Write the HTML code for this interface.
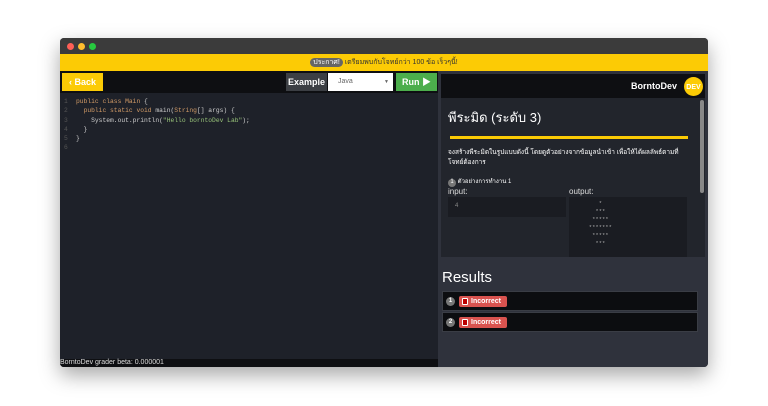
<!DOCTYPE html>
<html><head><meta charset="utf-8"><style>
*{margin:0;padding:0;box-sizing:border-box}
body{width:768px;height:406px;background:#fff;font-family:"Liberation Sans","Noto Sans CJK SC",sans-serif;position:relative;overflow:hidden}
.win{position:absolute;left:60px;top:38px;width:648px;height:329px;background:#2b2e37;border-radius:4px;overflow:hidden;box-shadow:0 8px 20px rgba(0,0,0,.35)}
.tb{height:16px;background:#3b3b3b;position:relative}
.dot{position:absolute;top:5px;width:7px;height:7px;border-radius:50%}
.ban{position:absolute;top:16px;left:0;right:0;height:17px;background:#fccb05;font-size:7px;color:#333;text-align:center;line-height:17px}
.ban span.p{background:#666;color:#fff;border-radius:6px;padding:1px 3px}
.left{position:absolute;left:0;top:33px;width:378px;height:296px;background:#1e2129}
.tool{height:22px;background:#0e0f12;position:relative}
.btn{position:absolute;top:2px;height:18px;font-size:9px;font-weight:bold;line-height:18px;text-align:center}
.code{font-family:"Liberation Mono",monospace;font-size:6.3px;line-height:9.3px;padding:4px 0 0 4px;color:#ccc}
.code .n{color:#555;display:inline-block;width:12px}
.k{color:#d19a66}.s{color:#98c379}
.foot{position:absolute;left:0;bottom:0;width:378px;height:8px;background:#0e0f12;color:#ddd;font-size:7px;line-height:8px}
.right{position:absolute;left:378px;top:33px;width:270px;height:296px;background:#2f323c}
.card{position:absolute;left:3px;top:3px;width:264px;height:183px;background:#22252c;overflow:hidden}
.ch{height:24px;background:#0e0f12;position:relative}
.res{position:absolute;left:4px;width:256px;height:20px;background:#0c0d10;border:1px solid #3a3d45}
.num{position:absolute;left:3px;top:5px;width:9px;height:9px;border-radius:50%;background:#777;color:#fff;font-size:6px;text-align:center;line-height:9px;font-weight:bold}
.inc{position:absolute;left:16px;top:4px;width:48px;height:11px;background:#d9534f;border-radius:2px;color:#fff;font-size:7px;font-weight:bold;line-height:11px;padding-left:12px}
.inc i{position:absolute;left:3px;top:2px;width:6px;height:7px;background:#b00;border:1px solid #fff;border-radius:1px}
</style></head><body>
<div class="win">
<div class="tb"><div class="dot" style="left:7px;background:#ff5f56"></div><div class="dot" style="left:18px;background:#ffbd2e"></div><div class="dot" style="left:29px;background:#27c93f"></div></div>
<div class="ban"><span class="p">ประกาศ!</span> เตรียมพบกับโจทย์กว่า 100 ข้อ เร็วๆนี้!</div>
<div class="left">
<div class="tool">
<div class="btn" style="left:2px;width:41px;background:#fccb05;color:#fff">‹ Back</div>
<div class="btn" style="left:226px;width:41px;background:#3c3f44;color:#fff">Example</div>
<div class="btn" style="left:268px;width:65px;background:#fff;color:#666;font-weight:normal;font-size:7px;text-align:left;padding-left:10px">Java<span style="position:absolute;right:4px;font-size:5px">▼</span></div>
<div class="btn" style="left:336px;width:41px;background:#4cae4c;color:#fff">Run ▶</div>
</div>
<div class="code">
<div><span class="n">1</span><span class="k">public class Main</span> {</div>
<div><span class="n">2</span>&nbsp;&nbsp;<span class="k">public static void</span> main(<span class="k">String</span>[] args) {</div>
<div><span class="n">3</span>&nbsp;&nbsp;&nbsp;&nbsp;System.out.println(<span class="s">"Hello borntoDev Lab"</span>);</div>
<div><span class="n">4</span>&nbsp;&nbsp;}</div>
<div><span class="n">5</span>}</div>
<div><span class="n">6</span></div>
</div>
<div class="foot">BorntoDev grader beta: 0.000001</div>
</div>
<div class="right">
<div class="card">
<div class="ch"><span style="position:absolute;right:28px;top:7px;color:#fff;font-size:9px;font-weight:bold">BorntoDev</span><div style="position:absolute;right:2px;top:3px;width:19px;height:19px;border-radius:50%;background:#fccb05;color:#fff;font-size:7px;font-weight:bold;text-align:center;line-height:21px">DEV</div></div>
<div style="padding:0 7px;color:#fff">
<div style="font-size:13px;margin-top:9px">พีระมิด (ระดับ 3)</div>
<div style="height:3px;background:#fccb05;margin:8px 10px 0 2px"></div>
<div style="font-size:6.5px;margin-top:9px;line-height:10px;width:240px">จงสร้างพีระมิดในรูปแบบดังนี้ โดยดูตัวอย่างจากข้อมูลนำเข้า เพื่อให้ได้ผลลัพธ์ตามที่โจทย์ต้องการ</div>
<div style="font-size:6px;margin-top:8px"><span style="display:inline-block;width:8px;height:8px;border-radius:50%;background:#777;text-align:center">1</span> ตัวอย่างการทำงาน 1</div>
<div style="position:relative;font-size:8px;color:#ddd">
<div style="position:absolute;left:0;top:0">input:</div>
<div style="position:absolute;left:121px;top:0">output:</div>
<div style="position:absolute;left:0;top:10px;width:118px;height:20px;background:#1a1c22;font-size:6px;color:#888;padding:6px 7px">4</div>
<div style="position:absolute;left:121px;top:10px;width:118px;height:70px;background:#1a1c22;font-size:5.5px;color:#aaa;font-family:'Liberation Mono',monospace;line-height:8px;padding-top:3px;white-space:pre">         *
        ***
       *****
      *******
       *****
        ***</div>
</div></div>
<div style="position:absolute;right:1px;top:26px;width:4px;height:93px;background:#888;border-radius:2px"></div>
</div>
<div style="position:absolute;left:4px;top:198px;color:#fff;font-size:15px">Results</div>
<div class="res" style="top:220px"><div class="num">1</div><div class="inc"><i></i>Incorrect</div></div>
<div class="res" style="top:241px"><div class="num">2</div><div class="inc"><i></i>Incorrect</div></div>
</div>
</div>
</body></html>
